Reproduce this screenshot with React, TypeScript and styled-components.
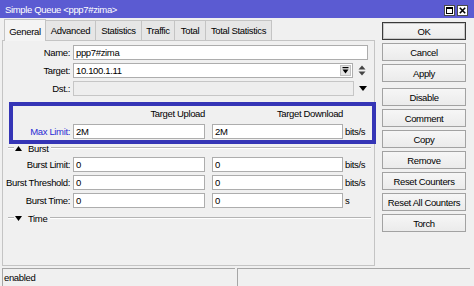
import React from "react";
import styled, { createGlobalStyle } from "styled-components";

const Global = createGlobalStyle`
  html, body { margin: 0; padding: 0; background: #f0f0f0; }
  body {
    font-family: "Liberation Sans", Arial, sans-serif;
    font-size: 9.5px;
    letter-spacing: -0.35px;
    color: #000;
  }
  * { box-sizing: border-box; }
`;

const Window = styled.div`
  position: relative;
  width: 474px;
  height: 286px;
  display: flex;
  flex-direction: column;
  background: #f0f0f0;
  overflow: hidden;
`;

const TitleBar = styled.div`
  height: 18px;
  flex: none;
  background: #5b5bd2;
  display: flex;
  align-items: center;
  padding: 0 6px 0 5px;
  color: #fff;
`;

const Title = styled.span`
  flex: 1;
  white-space: nowrap;
`;

const WinButtons = styled.div`
  display: flex;
  gap: 2px;
  margin-top: 2px;
`;

const WinBtn = styled.div`
  width: 11px;
  height: 11px;
  background: #fff;
  border: 1px solid #4a4a4a;
  display: flex;
  align-items: center;
  justify-content: center;
`;

const Body = styled.div`
  flex: 1;
  display: flex;
  padding: 2px 0 2px 2px;
  gap: 7px;
`;

const LeftCol = styled.div`
  width: 373px;
  display: flex;
  flex-direction: column;
`;

const TabRow = styled.div`
  height: 21px;
  display: flex;
  padding-left: 2px;
  position: relative;
  z-index: 1;
`;

const Tab = styled.div<{ $w: number; $active?: boolean }>`
  width: ${(p) => p.$w}px;
  height: ${(p) => (p.$active ? 22 : 21)}px;
  margin-top: ${(p) => (p.$active ? -1 : 0)}px;
  border: 1px solid #c4c4c4;
  border-bottom: ${(p) => (p.$active ? "none" : "1px solid #c4c4c4")};
  border-left: ${(p) => (p.$active ? "1px solid #c4c4c4" : "none")};
  background: ${(p) => (p.$active ? "#f4f4f4" : "#e6e6e6")};
  display: flex;
  align-items: center;
  justify-content: center;
  white-space: nowrap;
  padding-top: ${(p) => (p.$active ? 1 : 0)}px;
`;

const Panel = styled.div`
  flex: 1;
  margin-top: -1px;
  border: 1px solid #c4c4c4;
  background: #f0f0f0;
  padding-top: 2px;
  display: flex;
  flex-direction: column;
`;

const Row = styled.div<{ $h?: number }>`
  display: flex;
  align-items: center;
  height: ${(p) => p.$h ?? 18}px;
  flex: none;
`;

const Label = styled.span<{ $accent?: boolean }>`
  width: 67px;
  margin-right: 3px;
  text-align: right;
  white-space: nowrap;
  color: ${(p) => (p.$accent ? "#2b2bd4" : "#000")};
`;

const Field = styled.div<{ $w: number; $disabled?: boolean }>`
  width: ${(p) => p.$w}px;
  height: 15px;
  border: 1px solid ${(p) => (p.$disabled ? "#c6c6c6" : "#adadad")};
  background: ${(p) => (p.$disabled ? "#eeeeee" : "#ffffff")};
  display: flex;
  align-items: center;
  padding: 0 1px 0 2px;
  white-space: nowrap;
`;

const FieldText = styled.span`
  flex: 1;
`;

const InnerBtn = styled.div`
  width: 11px;
  height: 11px;
  background: #e4e4e4;
  border: 1px solid #c0c0c0;
  display: flex;
  align-items: center;
  justify-content: center;
`;

const SideIcon = styled.div`
  width: 10px;
  margin-left: 4px;
  display: flex;
  align-items: center;
  justify-content: center;
`;

const ColGap = styled.div`
  width: 7px;
`;

const ColHead = styled.span<{ $w: number }>`
  width: ${(p) => p.$w}px;
  text-align: right;
  white-space: nowrap;
`;

const Unit = styled.span`
  margin-left: 2px;
  white-space: nowrap;
`;

const Section = styled.div<{ $mt: number }>`
  display: flex;
  align-items: center;
  height: 14px;
  flex: none;
  margin-top: ${(p) => p.$mt}px;
  padding: 0 3px 0 5px;
`;

const Rule = styled.div<{ $w?: number }>`
  ${(p) => (p.$w ? `width: ${p.$w}px;` : "flex: 1;")}
  height: 2px;
  border-top: 1px solid #b4b4b4;
  border-bottom: 1px solid #ffffff;
`;

const SectionTitle = styled.span`
  margin: 0 3px 0 6px;
`;

const Arrow = styled.svg`
  margin-left: 1px;
  flex: none;
`;

const Spacer = styled.div<{ $h: number }>`
  height: ${(p) => p.$h}px;
  flex: none;
`;

const RightCol = styled.div`
  width: 84px;
  display: flex;
  flex-direction: column;
  gap: 3px;
  padding-top: 2px;
`;

const Button = styled.div<{ $default?: boolean; $mt?: number }>`
  height: 18px;
  flex: none;
  margin-top: ${(p) => p.$mt ?? 0}px;
  border: 1px solid ${(p) => (p.$default ? "#3a3a3a" : "#a2a2a2")};
  box-shadow: ${(p) => (p.$default ? "inset 0 0 0 1px #c8c8c8" : "none")};
  background: linear-gradient(#f6f6f6, #ebebeb);
  display: flex;
  align-items: center;
  justify-content: center;
  white-space: nowrap;
`;

const StatusBar = styled.div`
  height: 18px;
  flex: none;
  display: flex;
  gap: 2px;
  padding: 0 4px 0 2px;
`;

const StatusCell = styled.div<{ $w?: number }>`
  ${(p) => (p.$w ? `width: ${p.$w}px;` : "flex: 1;")}
  border-top: 1px solid #a6a6a6;
  border-left: 1px solid #a6a6a6;
  display: flex;
  align-items: center;
  padding-left: 1px;
  padding-bottom: 1px;
`;

const Highlight = styled.div`
  position: absolute;
  left: 9px;
  top: 102px;
  width: 367px;
  height: 42px;
  border: 4px solid #3535b6;
  pointer-events: none;
`;

const DownBar = () => (
  <svg width="7" height="7" viewBox="0 0 7 7">
    <rect x="0.5" y="0" width="6" height="1.2" fill="#000" />
    <polygon points="0.5,2.5 6.5,2.5 3.5,6.5" fill="#000" />
  </svg>
);

const UpDown = () => (
  <svg width="8" height="11" viewBox="0 0 8 11">
    <polygon points="0.5,4.5 7.5,4.5 4,0.5" fill="#444" />
    <polygon points="0.5,6.5 7.5,6.5 4,10.5" fill="#444" />
  </svg>
);

const Down = () => (
  <svg width="8" height="5" viewBox="0 0 8 5">
    <polygon points="0,0 8,0 4,5" fill="#000" />
  </svg>
);

const tabs: { name: string; w: number }[] = [
  { name: "General", w: 42 },
  { name: "Advanced", w: 50 },
  { name: "Statistics", w: 46 },
  { name: "Traffic", w: 33 },
  { name: "Total", w: 31 },
  { name: "Total Statistics", w: 66 },
];

const buttons = [
  "OK",
  "Cancel",
  "Apply",
  "Disable",
  "Comment",
  "Copy",
  "Remove",
  "Reset Counters",
  "Reset All Counters",
  "Torch",
];

const burstRows: { label: string; unit: string }[] = [
  { label: "Burst Limit:", unit: "bits/s" },
  { label: "Burst Threshold:", unit: "bits/s" },
  { label: "Burst Time:", unit: "s" },
];

export default function App() {
  return (
    <>
      <Global />
      <Window>
        <TitleBar>
          <Title>Simple Queue &lt;ppp7#zima&gt;</Title>
          <WinButtons>
            <WinBtn>
              <svg width="7" height="7" viewBox="0 0 7 7">
                <rect x="0.5" y="0.5" width="6" height="6" fill="none" stroke="#000" strokeWidth="1" />
                <rect x="0.5" y="0.5" width="6" height="1.5" fill="#000" />
              </svg>
            </WinBtn>
            <WinBtn>
              <svg width="7" height="7" viewBox="0 0 7 7">
                <path d="M0.8 0.8 L6.2 6.2 M6.2 0.8 L0.8 6.2" stroke="#000" strokeWidth="1.6" />
              </svg>
            </WinBtn>
          </WinButtons>
        </TitleBar>

        <Body>
          <LeftCol>
            <TabRow>
              {tabs.map((t, i) => (
                <Tab key={t.name} $w={t.w} $active={i === 0}>
                  {t.name}
                </Tab>
              ))}
            </TabRow>
            <Panel>
              <Row>
                <Label>Name:</Label>
                <Field $w={295}>
                  <FieldText>ppp7#zima</FieldText>
                </Field>
              </Row>
              <Row>
                <Label>Target:</Label>
                <Field $w={280}>
                  <FieldText>10.100.1.11</FieldText>
                  <InnerBtn>
                    <DownBar />
                  </InnerBtn>
                </Field>
                <SideIcon>
                  <UpDown />
                </SideIcon>
              </Row>
              <Row>
                <Label>Dst.:</Label>
                <Field $w={281} $disabled />
                <SideIcon>
                  <Down />
                </SideIcon>
              </Row>

              <Spacer $h={7} />
              <Row>
                <Label />
                <ColHead $w={132}>Target Upload</ColHead>
                <ColGap />
                <ColHead $w={131}>Target Download</ColHead>
              </Row>
              <Row>
                <Label $accent>Max Limit:</Label>
                <Field $w={132}>
                  <FieldText>2M</FieldText>
                </Field>
                <ColGap />
                <Field $w={131}>
                  <FieldText>2M</FieldText>
                </Field>
                <Unit>bits/s</Unit>
              </Row>

              <Section $mt={1}>
                <Rule $w={6} />
                <Arrow width="7" height="5" viewBox="0 0 7 5">
                  <polygon points="0,5 7,5 3.5,0" fill="#000" />
                </Arrow>
                <SectionTitle>Burst</SectionTitle>
                <Rule />
              </Section>

              {burstRows.map((r) => (
                <Row key={r.label}>
                  <Label>{r.label}</Label>
                  <Field $w={132}>
                    <FieldText>0</FieldText>
                  </Field>
                  <ColGap />
                  <Field $w={131}>
                    <FieldText>0</FieldText>
                  </Field>
                  <Unit>{r.unit}</Unit>
                </Row>
              ))}

              <Section $mt={2}>
                <Rule $w={6} />
                <Arrow width="7" height="5" viewBox="0 0 7 5">
                  <polygon points="0,0 7,0 3.5,5" fill="#000" />
                </Arrow>
                <SectionTitle>Time</SectionTitle>
                <Rule />
              </Section>
            </Panel>
          </LeftCol>

          <RightCol>
            {buttons.map((b, i) => (
              <Button key={b} $default={i === 0} $mt={b === "Disable" ? 3 : 0}>
                {b}
              </Button>
            ))}
          </RightCol>
        </Body>

        <StatusBar>
          <StatusCell $w={233}>enabled</StatusCell>
          <StatusCell />
        </StatusBar>

        <Highlight />
      </Window>
    </>
  );
}
